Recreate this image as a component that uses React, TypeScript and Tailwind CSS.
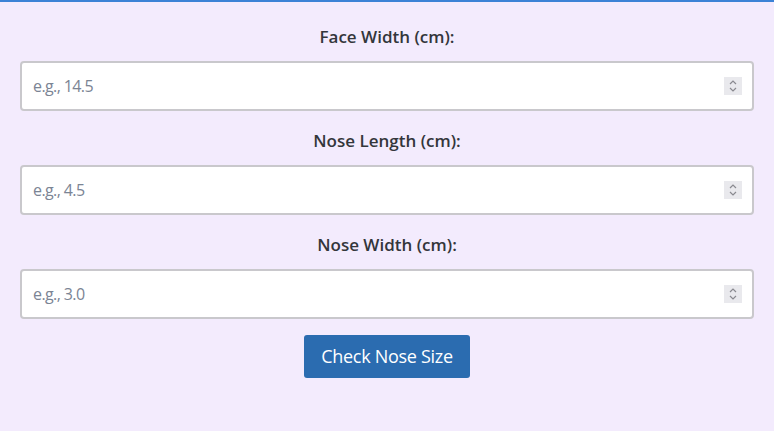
import React from "react";

const fields = [
  { label: "Face Width (cm):", ph: "e.g., 14.5" },
  { label: "Nose Length (cm):", ph: "e.g., 4.5" },
  { label: "Nose Width (cm):", ph: "e.g., 3.0" },
];

function Spinner() {
  return (
    <div className="w-[18px] h-[18px] bg-[#e9e9ed] flex items-center justify-center shrink-0">
      <svg width="10" height="14" viewBox="0 0 10 14" fill="none" stroke="#8a8a90" strokeWidth="1.2">
        <path d="M2 5 L5 2 L8 5" />
        <path d="M2 9 L5 12 L8 9" />
      </svg>
    </div>
  );
}

export default function App() {
  return (
    <div
      className="w-[774px] h-[431px] bg-[#f3ebfd] border-t-2 border-[#3b82d6] pt-[23px] px-[20px] flex flex-col items-center overflow-hidden"
      style={{ fontFamily: '"Open Sans", "Noto Sans", sans-serif' }}
    >
      {fields.map((f, i) => (
        <div key={i} className={"w-full flex flex-col items-center " + (i > 0 ? "mt-[18px]" : "")}>
          <label className="text-[17px] leading-[24px] font-semibold text-[#33363b]">{f.label}</label>
          <div className="mt-[12px] w-full h-[50px] bg-white border-2 border-[#c9c8cc] rounded-[4px] flex items-center pl-[11px] pr-[10px]">
            <input
              type="text"
              placeholder={f.ph}
              className="flex-1 outline-none text-[16px] bg-transparent placeholder:text-[#7b8494] text-[#333] tracking-[-0.6px]"
            />
            <Spinner />
          </div>
        </div>
      ))}
      <button className="mt-[16px] w-[166px] h-[43px] bg-[#2b6cb0] rounded-[3px] text-white text-[18px] tracking-[-0.3px]">
        Check Nose Size
      </button>
    </div>
  );
}
